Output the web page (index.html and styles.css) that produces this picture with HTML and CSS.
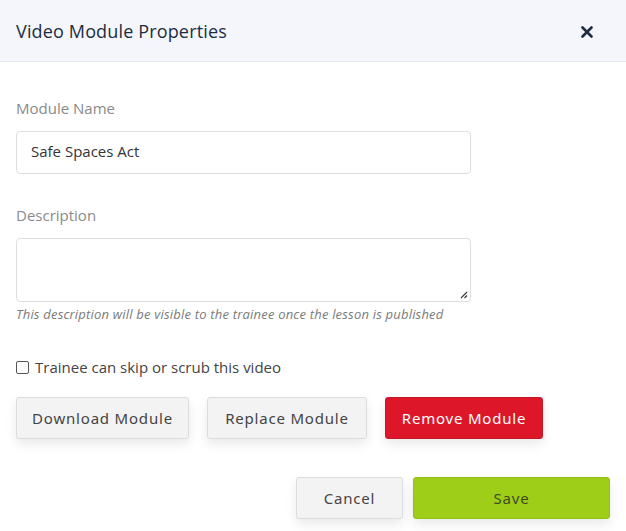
FILE: index.html
```html
<!DOCTYPE html>
<html>
<head>
<meta charset="utf-8">
<link rel="stylesheet" href="styles.css">
</head>
<body>
<div class="modal">
  <div class="modal-header">
    <h1 class="modal-title">Video Module Properties</h1>
    <button class="close-btn" aria-label="Close">
      <svg width="12" height="12" viewBox="0 0 12 12"><path d="M1.5 1.5 L10.5 10.5 M10.5 1.5 L1.5 10.5" stroke="#1c2d42" stroke-width="2.6" stroke-linecap="round"/></svg>
    </button>
  </div>
  <div class="modal-body">
    <div class="field">
      <label class="field-label">Module Name</label>
      <div class="text-input">Safe Spaces Act</div>
    </div>
    <div class="field field-desc">
      <label class="field-label">Description</label>
      <div class="text-area">
        <svg class="grip" width="9" height="9" viewBox="0 0 9 9"><path d="M8 2 L2 8 M8 5.5 L5.5 8" stroke="#333" stroke-width="1.1"/></svg>
      </div>
      <p class="help">This description will be visible to the trainee once the lesson is published</p>
    </div>
    <label class="check-row"><span class="checkbox"></span>Trainee can skip or scrub this video</label>
    <div class="actions">
      <button class="btn btn-grey btn-download">Download Module</button>
      <button class="btn btn-grey btn-replace">Replace Module</button>
      <button class="btn btn-red btn-remove">Remove Module</button>
    </div>
    <div class="footer">
      <button class="btn btn-grey btn-cancel">Cancel</button>
      <button class="btn btn-green btn-save">Save</button>
    </div>
  </div>
</div>
</body>
</html>
```

FILE: styles.css
```css
* { box-sizing: border-box; }
html, body { margin: 0; padding: 0; background: #fff; }
body { font-family: "Open Sans", Lato, sans-serif; }
.modal { width: 626px; height: 531px; overflow: hidden; }
.modal-header {
  height: 62px;
  background: #f4f6fb;
  border-bottom: 1px solid #e6e9ef;
  display: flex;
  align-items: center;
  justify-content: space-between;
  padding: 0 33px 0 16px;
}
.modal-title { margin: 0; font-size: 18px; font-weight: 400; color: #1c2d42; letter-spacing: 0.15px; }
.close-btn { background: none; border: 0; padding: 0; margin-top: 2px; display: flex; }
.modal-body { padding: 36px 16px 0 16px; }
.field { display: flex; flex-direction: column; }
.field-label { font-size: 15px; line-height: 20px; color: #8a8a8a; margin-bottom: 13px; }
.text-input {
  width: 455px; height: 43px;
  border: 1px solid #dedede; border-radius: 4px;
  padding: 0 14px 3px; display: flex; align-items: center;
  font-size: 15px; color: #333;
}
.field-desc { margin-top: 31px; }
.text-area {
  width: 455px; height: 64px;
  border: 1px solid #dedede; border-radius: 4px;
  position: relative;
}
.grip { position: absolute; right: 2px; bottom: 2px; }
.help { margin: 4px 0 0; font-size: 13px; line-height: 17px; font-style: italic; color: #7a7a7a; letter-spacing: 0.2px; }
.check-row { display: flex; align-items: center; margin-top: 34px; font-size: 15px; line-height: 20px; color: #444; }
.checkbox { width: 13px; height: 13px; border: 1px solid #555; border-radius: 2px; margin-right: 6px; background: #fff; }
.actions { display: flex; gap: 18px; margin-top: 20px; }
.btn {
  height: 42px; border-radius: 3px; font-family: "Noto Sans", Roboto, sans-serif;
  font-size: 15px; letter-spacing: 0.8px; padding: 0;
  box-shadow: 0 5px 12px rgba(0,0,0,0.09);
}
.btn-grey { background: #f3f3f3; border: 1px solid #dcdcdc; color: #444; }
.btn-red { background: #dd1729; border: 1px solid #c51526; color: #fff; }
.btn-green { background: #9ece17; border: 1px solid #93c015; color: #404a22; }
.btn-download { width: 173px; }
.btn-replace { width: 160px; }
.btn-remove { width: 158px; }
.footer { display: flex; justify-content: flex-end; gap: 10px; margin-top: 38px; }
.btn-cancel { width: 107px; }
.btn-save { width: 197px; }
```
